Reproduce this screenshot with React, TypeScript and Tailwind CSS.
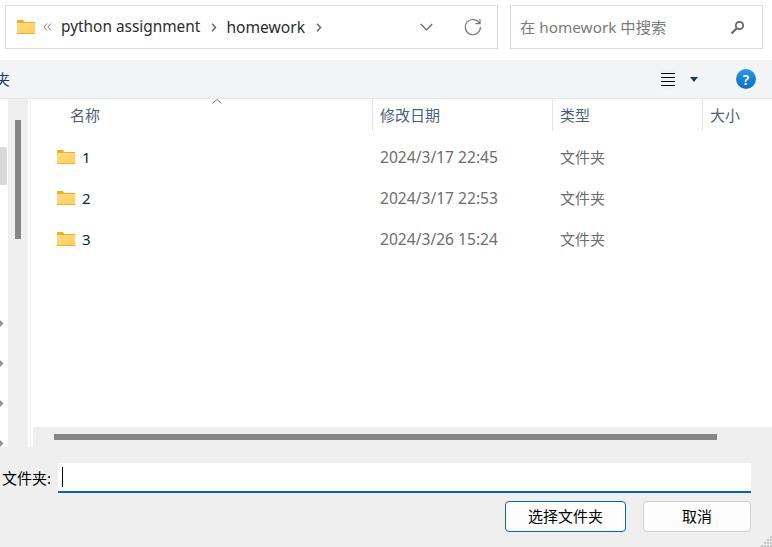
import React from "react";

const font = "[font-family:'Noto_Sans','Noto_Sans_CJK_SC',sans-serif]";

function Folder({ className = "" }: { className?: string }) {
  return (
    <svg width="18" height="14" viewBox="0 0 18 14" className={`shrink-0 ${className}`}>
      <defs>
        <linearGradient id="folderFill" x1="0" y1="0" x2="1" y2="1">
          <stop offset="0" stopColor="#fedb7e" />
          <stop offset="1" stopColor="#fccf62" />
        </linearGradient>
      </defs>
      <path d="M0 1C0 .4.4 0 1 0h5l1.500 2H0z" fill="#f5ae15" />
      <rect x="0" y="2" width="18" height="12" fill="#f2ae2a" />
      <rect x="0" y="3" width="18" height="10" fill="url(#folderFill)" />
    </svg>
  );
}

function Chevron() {
  return (
    <svg width="6" height="9" viewBox="0 0 6 9" fill="none" stroke="#666" strokeWidth="1.4">
      <path d="M1 .8 4.600 4.500 1 8.200" />
    </svg>
  );
}

function Row({ name, date }: { name: string; date: string }) {
  return (
    <div className="flex h-[41px] items-center">
      <Folder className="ml-[26px]" />
      <span className="ml-[7px] w-[298px] text-[15px] leading-[20px] text-[#0a2540]">{name}</span>
      <span className="w-[180px] text-[15.6px] leading-[20px] text-[#6d6d6d]">{date}</span>
      <span className="text-[15px] leading-[20px] text-[#6d6d6d]">文件夹</span>
    </div>
  );
}

function HeadCell({ label, className }: { label: string; className: string }) {
  return (
    <div className={`flex h-[32px] items-center border-r border-[#e5e5e5] pl-[7px] text-[15px] text-[#4c607a] ${className}`}>
      {label}
    </div>
  );
}

function Dot() {
  return <div className="h-[2px] w-[2px] bg-[#c4c4c4]" />;
}

export default function App() {
  return (
    <div className={`relative flex h-[547px] w-[772px] flex-col overflow-hidden bg-white ${font}`}>
      {/* address row */}
      <div className="flex h-[60px] shrink-0 pl-[5px] pt-[5px]">
        <div className="flex h-[44px] w-[493px] shrink-0 items-center border border-[#dadada] pl-[11px]">
          <Folder />
          <svg width="9" height="8" viewBox="0 0 9 8" fill="none" stroke="#777" strokeWidth="1" className="ml-[8px] shrink-0">
            <path d="M4 .5.8 4 4 7.500M8 .5 4.800 4 8 7.500" />
          </svg>
          <span className="ml-[9px] text-[15.4px] leading-[20px] text-[#2b2b2b]">python assignment</span>
          <span className="ml-[11px]"><Chevron /></span>
          <span className="ml-[9px] text-[15.6px] leading-[20px] text-[#2b2b2b]">homework</span>
          <span className="ml-[11px]"><Chevron /></span>
          <div className="flex-1" />
          <svg width="13" height="8" viewBox="0 0 13 8" fill="none" stroke="#666" strokeWidth="1.2" className="shrink-0">
            <path d="M.8 1 6.500 6.800 12.200 1" />
          </svg>
          <svg width="18" height="18" viewBox="0 0 18 18" fill="none" stroke="#777" strokeWidth="1.2" className="ml-[31px] mr-[15px] shrink-0">
            <path d="M15.600 5.500A7.600 7.600 0 1 0 16.500 9M16 1v4.700h-4.700" />
          </svg>
        </div>
        <div className="ml-[12px] flex h-[44px] w-[253px] shrink-0 items-center border border-[#dadada] pl-[9px]">
          <span className="text-[15.3px] leading-[20px] text-[#7a7a7a]">在 homework 中搜索</span>
          <div className="flex-1" />
          <svg width="15" height="15" viewBox="0 0 15 15" fill="none" stroke="#666" className="mr-[17px] shrink-0">
            <circle cx="9.500" cy="5.500" r="3.700" strokeWidth="1.800" />
            <path d="M6.500 8.500 1.500 13.500" strokeWidth="2.200" />
          </svg>
        </div>
      </div>

      {/* toolbar */}
      <div className="flex h-[39px] shrink-0 items-center border-b border-[#e6e8ea] bg-[#f3f4f6]">
        <span className="ml-[-5px] w-[15px] shrink-0 text-[15px] text-[#1f3a5c]">夹</span>
        <div className="ml-[648px] flex h-[20px] w-[20px] shrink-0 flex-col items-center justify-center gap-[3px] bg-[#f0f1f2]">
          <div className="h-[1px] w-[14px] bg-black" />
          <div className="h-[1px] w-[14px] bg-black" />
          <div className="h-[1px] w-[14px] bg-black" />
          <div className="h-[1px] w-[14px] bg-black" />
        </div>
        <svg width="8" height="5" viewBox="0 0 8 5" className="ml-[12px] shrink-0">
          <path d="M0 0h8L4 5z" fill="#1f3a5c" />
        </svg>
        <div className="ml-[38px] flex h-[20px] w-[20px] shrink-0 items-center justify-center rounded-full bg-gradient-to-b from-[#2a97e6] to-[#0a6fc4] text-[14px] font-semibold text-white">
          ?
        </div>
      </div>

      {/* body */}
      <div className="flex h-[348px] shrink-0">
        <div className="flex w-[8px] shrink-0 flex-col bg-white">
          <div className="mt-[48px] h-[40px] w-[7px] rounded-r-[2px] bg-[#d9d9d9]" />
          <div className="mt-[135px] flex flex-col items-start gap-[33px]">
            {[0, 1, 2, 3].map((i) => (
              <svg key={i} width="4" height="7" viewBox="0 0 4 7" className="shrink-0">
                <path d="M0 0l3.500 3.500L0 7z" fill="#8d959c" />
              </svg>
            ))}
          </div>
        </div>
        <div className="w-[20px] shrink-0 bg-[#efefef] pl-[7px] pt-[21px]">
          <div className="h-[119px] w-[6px] bg-[#868686]" />
        </div>
        <div className="ml-[2px] flex flex-1 flex-col border-l border-[#f0f0f0]">
          <div className="flex shrink-0 bg-white">
            <div className="relative flex h-[32px] w-[342px] shrink-0 items-center border-r border-[#e5e5e5] pl-[39px] text-[15px] text-[#4c607a]">
              名称
              <svg width="10" height="5" viewBox="0 0 10 5" fill="none" stroke="#777" className="absolute left-[181px] top-0">
                <path d="M.5 4.500 5 .5l4.500 4" />
              </svg>
            </div>
            <HeadCell label="修改日期" className="w-[180px] shrink-0" />
            <HeadCell label="类型" className="w-[150px] shrink-0" />
            <div className="flex h-[32px] shrink-0 items-center pl-[7px] text-[15px] text-[#4c607a]">大小</div>
          </div>
          <div className="flex-1 pt-[5px]">
            <Row name="1" date="2024/3/17 22:45" />
            <Row name="2" date="2024/3/17 22:53" />
            <Row name="3" date="2024/3/26 15:24" />
          </div>
          <div className="ml-[2px] h-[20px] shrink-0 bg-[#efefef] pl-[21px] pt-[7px]">
            <div className="h-[6px] w-[663px] bg-[#868686]" />
          </div>
        </div>
      </div>

      {/* footer */}
      <div className="flex-1 bg-[#efefef]">
        <div className="flex pt-[16px]">
          <span className="ml-[2px] mt-[5px] w-[48px] shrink-0 whitespace-nowrap text-[15px] leading-[20px] text-black">文件夹:</span>
          <div className="ml-[8px] flex h-[30px] w-[693px] shrink-0 items-center border-b-2 border-[#0067c0] bg-white pl-[4px]">
            <div className="h-[20px] w-[1px] bg-black" />
          </div>
        </div>
        <div className="mt-[8px] flex pl-[505px]">
          <div className="flex h-[31px] w-[121px] items-center justify-center rounded-[4px] border border-[#0067c0] bg-[#fdfdfd] text-[15px] text-black">
            选择文件夹
          </div>
          <div className="ml-[17px] flex h-[31px] w-[108px] items-center justify-center rounded-[4px] border border-[#cfcfcf] bg-[#fdfdfd] text-[15px] text-black">
            取消
          </div>
        </div>
      </div>

      {/* resize grip */}
      <div className="absolute bottom-0 right-0 flex flex-col items-end gap-[1px]">
        <div className="flex gap-[1px]"><Dot /></div>
        <div className="flex gap-[1px]"><Dot /><Dot /></div>
        <div className="flex gap-[1px]"><Dot /><Dot /><Dot /></div>
        <div className="flex gap-[1px]"><Dot /><Dot /><Dot /><Dot /></div>
      </div>
    </div>
  );
}
